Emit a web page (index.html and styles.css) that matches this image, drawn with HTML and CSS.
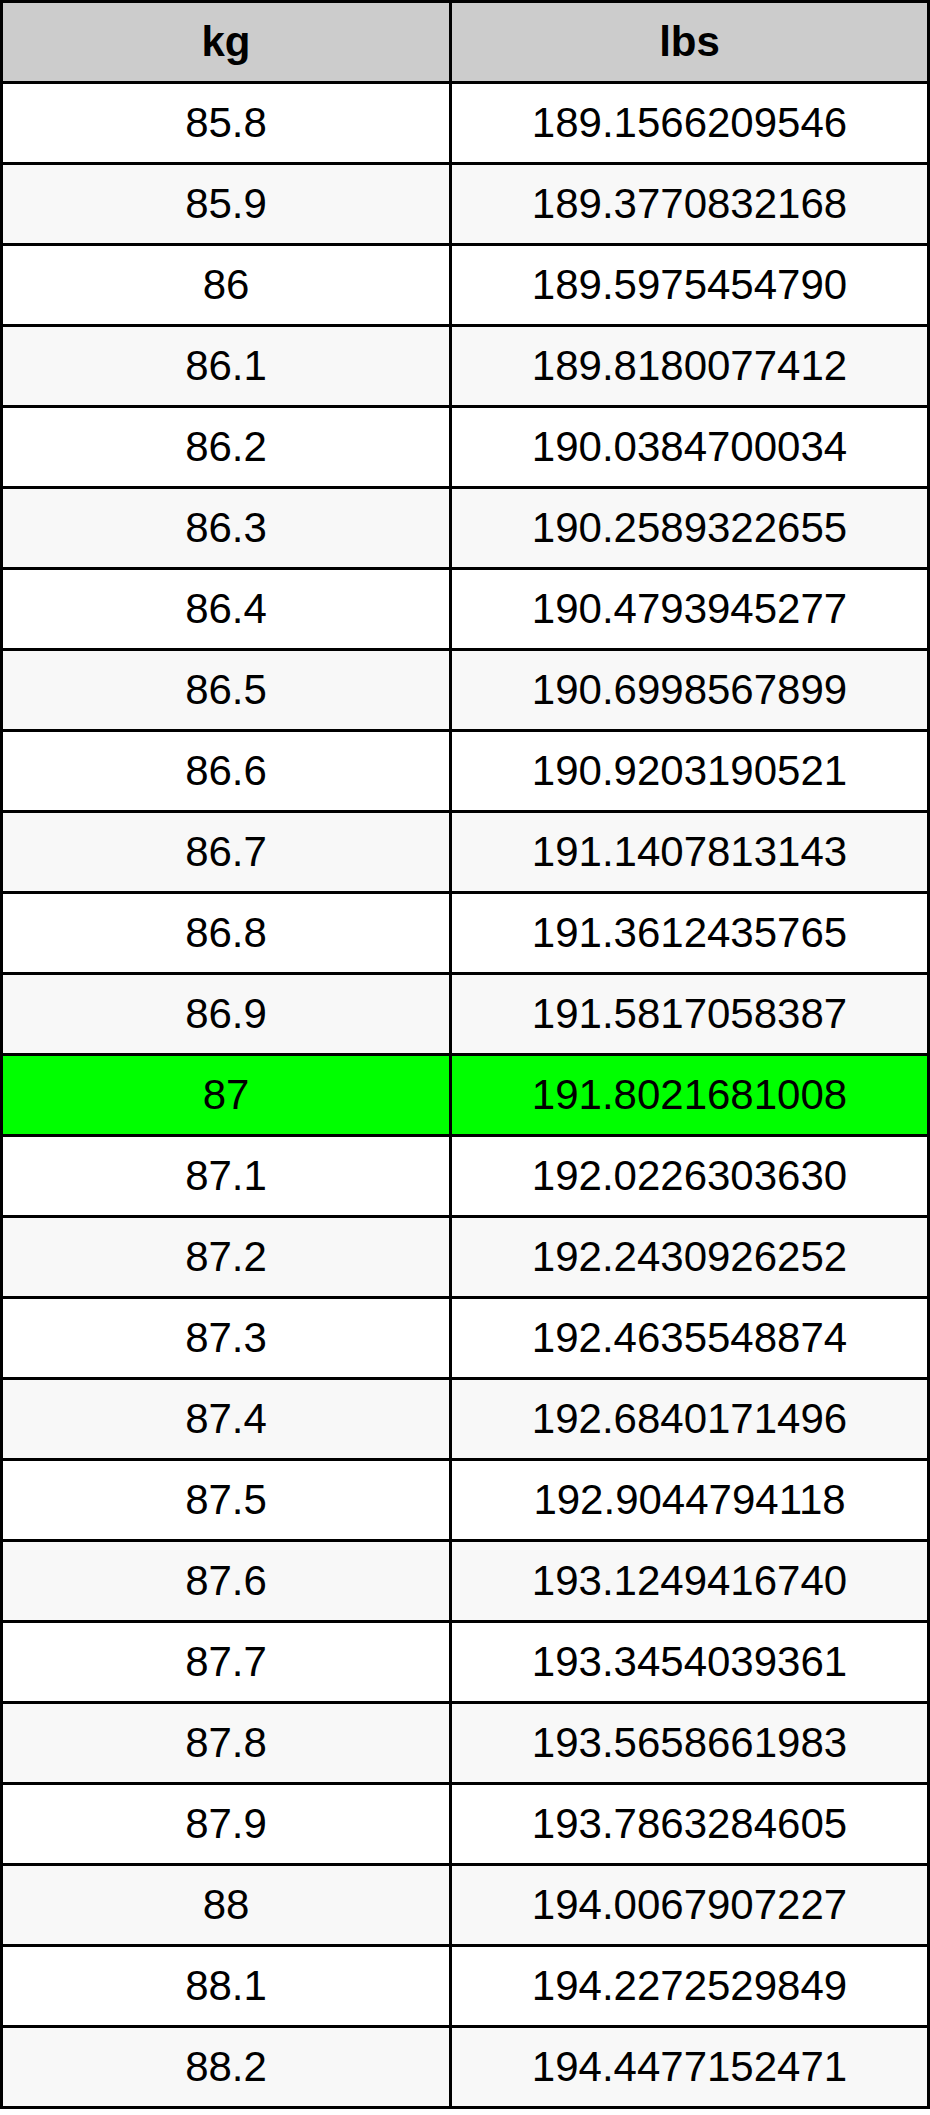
FILE: index.html
```html
<!DOCTYPE html>
<html>
<head>
<meta charset="utf-8">
<title>kg to lbs</title>
<link rel="stylesheet" href="styles.css">
</head>
<body>
<table class="conv">
<thead>
<tr><th class="c1">kg</th><th class="c2">lbs</th></tr>
</thead>
<tbody>
<tr><td>85.8</td><td>189.1566209546</td></tr>
<tr class="alt"><td>85.9</td><td>189.3770832168</td></tr>
<tr><td>86</td><td>189.5975454790</td></tr>
<tr class="alt"><td>86.1</td><td>189.8180077412</td></tr>
<tr><td>86.2</td><td>190.0384700034</td></tr>
<tr class="alt"><td>86.3</td><td>190.2589322655</td></tr>
<tr><td>86.4</td><td>190.4793945277</td></tr>
<tr class="alt"><td>86.5</td><td>190.6998567899</td></tr>
<tr><td>86.6</td><td>190.9203190521</td></tr>
<tr class="alt"><td>86.7</td><td>191.1407813143</td></tr>
<tr><td>86.8</td><td>191.3612435765</td></tr>
<tr class="alt"><td>86.9</td><td>191.5817058387</td></tr>
<tr class="hl"><td>87</td><td>191.8021681008</td></tr>
<tr><td>87.1</td><td>192.0226303630</td></tr>
<tr class="alt"><td>87.2</td><td>192.2430926252</td></tr>
<tr><td>87.3</td><td>192.4635548874</td></tr>
<tr class="alt"><td>87.4</td><td>192.6840171496</td></tr>
<tr><td>87.5</td><td>192.9044794118</td></tr>
<tr class="alt"><td>87.6</td><td>193.1249416740</td></tr>
<tr><td>87.7</td><td>193.3454039361</td></tr>
<tr class="alt"><td>87.8</td><td>193.5658661983</td></tr>
<tr><td>87.9</td><td>193.7863284605</td></tr>
<tr class="alt"><td>88</td><td>194.0067907227</td></tr>
<tr><td>88.1</td><td>194.2272529849</td></tr>
<tr class="alt"><td>88.2</td><td>194.4477152471</td></tr>
</tbody>
</table>
</body>
</html>
```
FILE: styles.css
```css
html, body {
  margin: 0;
  padding: 0;
  background: #ffffff;
}

.conv {
  border-collapse: separate;
  border-spacing: 0;
  border-top: 3px solid #000;
  border-left: 3px solid #000;
  width: 930px;
  table-layout: fixed;
  font-family: "Liberation Sans", Arial, sans-serif;
  font-size: 42px;
  color: #000;
}

.conv th,
.conv td {
  border-right: 3px solid #000;
  border-bottom: 3px solid #000;
  height: 78px;
  padding: 0;
  text-align: center;
  vertical-align: middle;
  box-sizing: content-box;
  line-height: 1;
}

.conv th {
  background: #cccccc;
  font-weight: bold;
}

.conv .c1 {
  width: 446px;
}

.conv .c2 {
  width: 475px;
}

.conv tbody tr {
  background: #ffffff;
}

.conv tbody tr.alt {
  background: #f8f8f8;
}

.conv tbody tr.hl {
  background: #00ff00;
}
```
